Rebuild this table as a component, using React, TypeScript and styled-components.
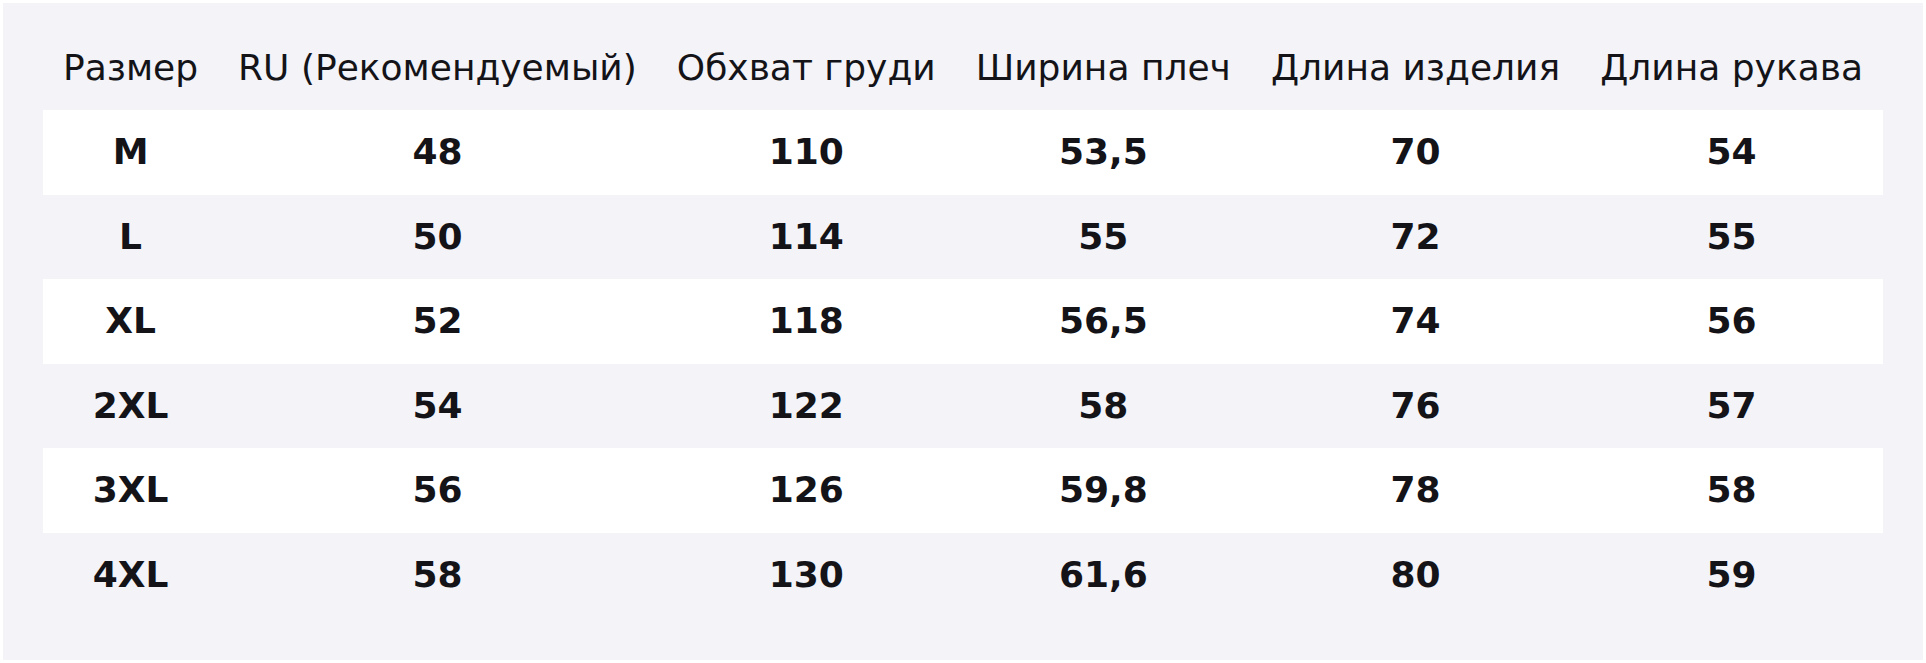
import React from "react";
import styled, { createGlobalStyle } from "styled-components";

const GlobalStyle = createGlobalStyle`
    html, body {
        margin: 0;
        padding: 0;
        background: #ffffff;
    }
    body {
        padding: 3px;
        font-family: "DejaVu Sans", Verdana, sans-serif;
        color: #131318;
    }
`;

type Row = [string, string, string, string, string, string];

const headers = [
    "Размер",
    "RU (Рекомендуемый)",
    "Обхват груди",
    "Ширина плеч",
    "Длина изделия",
    "Длина рукава",
];

const rows: Row[] = [
    ["M", "48", "110", "53,5", "70", "54"],
    ["L", "50", "114", "55", "72", "55"],
    ["XL", "52", "118", "56,5", "74", "56"],
    ["2XL", "54", "122", "58", "76", "57"],
    ["3XL", "56", "126", "59,8", "78", "58"],
    ["4XL", "58", "130", "61,6", "80", "59"],
];

const Panel = styled.div`
    background: #f3f3f8;
    padding: 23px 40px 43px 40px;
`;

const Table = styled.table`
    width: 100%;
    border-collapse: collapse;
    border-spacing: 0;
    font-size: 36px;
`;

const HeadCell = styled.th`
    padding: 21px 20px;
    line-height: 42px;
    font-weight: 400;
    text-align: center;
    white-space: nowrap;
`;

const BodyRow = styled.tr<{ $striped: boolean }>`
    background: ${({ $striped }) => ($striped ? "#ffffff" : "transparent")};
`;

const Cell = styled.td`
    padding: 21px 20px;
    line-height: 42.5px;
    font-weight: 700;
    text-align: center;
    white-space: nowrap;
`;

export default function App() {
    return (
        <>
            <GlobalStyle />
            <Panel>
                <Table>
                    <thead>
                        <tr>
                            {headers.map((h) => (
                                <HeadCell key={h}>{h}</HeadCell>
                            ))}
                        </tr>
                    </thead>
                    <tbody>
                        {rows.map((r, i) => (
                            <BodyRow key={r[0]} $striped={i % 2 === 0}>
                                {r.map((v, j) => (
                                    <Cell key={j}>{v}</Cell>
                                ))}
                            </BodyRow>
                        ))}
                    </tbody>
                </Table>
            </Panel>
        </>
    );
}
